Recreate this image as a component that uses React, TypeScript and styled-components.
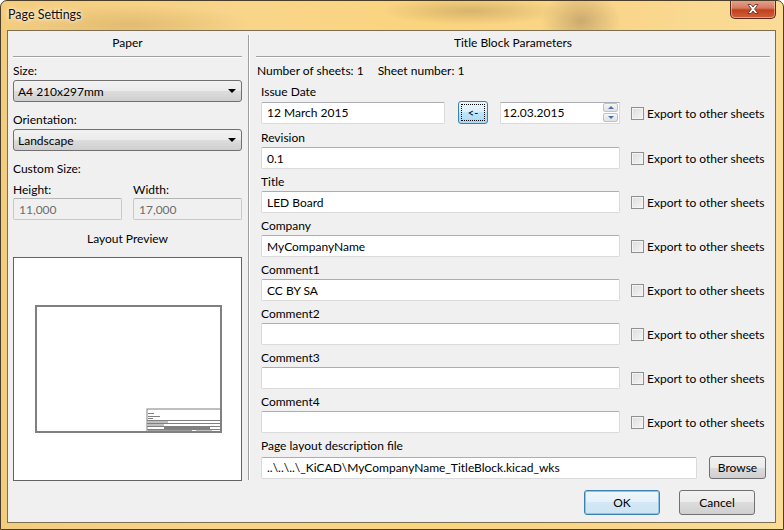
import React from "react";
import styled, { createGlobalStyle } from "styled-components";

const Global = createGlobalStyle`
  html, body {
    margin: 0;
    padding: 0;
    background: #ffffff;
  }
  * {
    box-sizing: border-box;
  }
`;

const font = `"Lato", "Noto Sans", sans-serif`;

const Window = styled.div`
  width: 784px;
  height: 530px;
  display: flex;
  flex-direction: column;
  border: 1px solid #4a3e28;
  border-radius: 7px 7px 0 0;
  overflow: hidden;
  font-family: ${font};
  font-size: 12px;
  color: #000;
  background:
    radial-gradient(ellipse 120px 20px at 130px 24px, rgba(200, 160, 90, 0.45), transparent),
    radial-gradient(ellipse 90px 14px at 470px 10px, rgba(150, 120, 70, 0.35), transparent),
    radial-gradient(ellipse 40px 30px at 580px 20px, rgba(120, 90, 60, 0.35), transparent),
    linear-gradient(90deg, #f3cd7e 0%, #f8d58a 30%, #fbd47e 55%, #f9d68b 80%, #fbdc97 100%);
`;

const TitleBar = styled.div`
  height: 29px;
  display: flex;
  justify-content: space-between;
  align-items: flex-start;
  padding-left: 7px;
`;

const TitleText = styled.span`
  margin-top: 6px;
  font-size: 12.5px;
  color: #111;
  text-shadow: 0 0 6px rgba(255, 255, 255, 0.9), 0 0 3px rgba(255, 255, 255, 0.9);
`;

const CloseButton = styled.div`
  width: 46px;
  height: 19px;
  margin-top: -1px;
  margin-right: 7px;
  border: 1px solid #5c2a1a;
  border-top: none;
  border-radius: 0 0 5px 5px;
  background: linear-gradient(#e8a693 0%, #d47a60 45%, #c3401d 55%, #d0603a 100%);
  box-shadow: inset 0 0 0 1px rgba(255, 220, 200, 0.5);
  display: flex;
  align-items: center;
  justify-content: center;
`;

const Client = styled.div`
  flex: 1;
  margin: 0 7px 6px 6px;
  border: 1px solid #7d6e52;
  background: #f0f0f0;
  padding: 4px 5px 7px 5px;
  display: flex;
  flex-direction: column;
`;

const Panels = styled.div`
  display: flex;
  height: 446px;
`;

const LeftCol = styled.div`
  width: 229px;
  display: flex;
  flex-direction: column;
`;

const RightCol = styled.div`
  flex: 1;
  display: flex;
  flex-direction: column;
`;

const Divider = styled.div`
  width: 2px;
  margin: 0 6px 1px 6px;
  border-left: 1px solid #a0a0a0;
  border-right: 1px solid #ffffff;
`;

const SectionHeader = styled.div`
  height: 22px;
  line-height: 16px;
  text-align: center;
  border-bottom: 1px solid #a0a0a0;
  box-shadow: 0 1px 0 #ffffff;
  flex-shrink: 0;
`;

const Label = styled.div<{ $top?: number; $center?: boolean }>`
  line-height: 16px;
  height: 16px;
  margin-top: ${(p) => p.$top ?? 0}px;
  text-align: ${(p) => (p.$center ? "center" : "left")};
  white-space: nowrap;
`;

const Select = styled.div`
  height: 22px;
  margin-top: 1px;
  border: 1px solid #707070;
  border-radius: 3px;
  background: linear-gradient(#f2f2f2 0%, #ebebeb 50%, #dddddd 50%, #cfcfcf 100%);
  display: flex;
  align-items: center;
  justify-content: space-between;
  padding: 0 5px 0 4px;
`;

const Arrow = styled.span`
  width: 0;
  height: 0;
  border-left: 4px solid transparent;
  border-right: 4px solid transparent;
  border-top: 4px solid #000;
`;

const SizeRow = styled.div`
  display: grid;
  grid-template-columns: 109px 109px;
  column-gap: 11px;
`;

const TextBox = styled.div<{ $disabled?: boolean; $width?: number }>`
  height: 22px;
  ${(p) => (p.$width ? `width: ${p.$width}px; flex-shrink: 0;` : "flex: 1;")}
  border: 1px solid ${(p) => (p.$disabled ? "#c9c9c9" : "#dadada")};
  border-top-color: ${(p) => (p.$disabled ? "#b5b5b5" : "#abadb3")};
  border-radius: 2px;
  background: ${(p) => (p.$disabled ? "#f0f0f0" : "#ffffff")};
  color: ${(p) => (p.$disabled ? "#6d6d6d" : "#000")};
  display: flex;
  align-items: center;
  padding-left: 5px;
  white-space: nowrap;
  overflow: hidden;
`;

const Preview = styled.div`
  margin-top: 10px;
  height: 224px;
  border: 1px solid #646464;
  background: #ffffff;
  display: flex;
  align-items: center;
  justify-content: center;
`;

const Info = styled.div`
  margin-top: 6px;
  line-height: 16px;
  display: flex;
  gap: 14px;
  padding-left: 1px;
`;

const Fields = styled.div`
  padding-left: 5px;
  display: flex;
  flex-direction: column;
`;

const FieldRow = styled.div<{ $top?: number }>`
  display: flex;
  align-items: center;
  margin-top: ${(p) => p.$top ?? 1}px;
`;

const SmallButton = styled.div<{ $focus?: boolean }>`
  height: 23px;
  flex-shrink: 0;
  display: flex;
  align-items: center;
  justify-content: center;
  border: 1px solid ${(p) => (p.$focus ? "#3c7fb1" : "#707070")};
  border-radius: 3px;
  background: ${(p) =>
    p.$focus
      ? "linear-gradient(#eaf6fd 0%, #d9f0fc 50%, #bee6fd 50%, #a7d9f5 100%)"
      : "linear-gradient(#f2f2f2 0%, #ebebeb 50%, #dddddd 50%, #cfcfcf 100%)"};
`;

const ArrowButton = styled(SmallButton)`
  width: 30px;
  margin: 0 12px 0 13px;
  position: relative;
  font-size: 11px;
  &::after {
    content: "";
    position: absolute;
    inset: 2px;
    border: 1px dotted #000;
  }
`;

const Spin = styled.div`
  width: 120px;
  height: 22px;
  flex-shrink: 0;
  border: 1px solid #dadada;
  border-top-color: #abadb3;
  background: #fff;
  display: flex;
  align-items: center;
  justify-content: space-between;
  padding-left: 2px;
`;

const SpinButtons = styled.div`
  display: flex;
  flex-direction: column;
  gap: 1px;
  margin-right: 1px;
`;

const SpinBtn = styled.div<{ $down?: boolean }>`
  width: 15px;
  height: 9px;
  border: 1px solid #c2c2c2;
  border-radius: 2px;
  background: linear-gradient(#f6f6f6, #e0e0e0);
  display: flex;
  align-items: center;
  justify-content: center;
  &::before {
    content: "";
    border-left: 3px solid transparent;
    border-right: 3px solid transparent;
    ${(p) => (p.$down ? "border-top: 3px solid #4a6fb0;" : "border-bottom: 3px solid #4a6fb0;")}
  }
`;

const Check = styled.label`
  display: flex;
  align-items: center;
  margin-left: 11px;
  gap: 3px;
  white-space: nowrap;
  padding-top: 1px;
`;

const Box = styled.span`
  width: 13px;
  height: 13px;
  border: 1px solid #8e8f8f;
  background: linear-gradient(135deg, #dcdcdc, #f6f6f6);
  box-shadow: inset 0 0 0 1px #f4f4f4;
`;

const Browse = styled(SmallButton)`
  width: 57px;
  margin-left: 12px;
`;

const Buttons = styled.div`
  margin-top: 9px;
  display: flex;
  justify-content: flex-end;
  gap: 19px;
  padding-right: 15px;
`;

const DialogButton = styled(SmallButton)`
  width: 76px;
  height: 25px;
`;

const OkButton = styled(DialogButton)`
  border-color: #3c7fb1;
  background: linear-gradient(#eef6fb 0%, #e4f0f8 50%, #d4e8f5 50%, #cde4f3 100%);
  box-shadow: inset 0 0 0 1px #8fc4e6;
`;

function ExportCheck() {
  return (
    <Check>
      <Box />
      Export to other sheets
    </Check>
  );
}

const fields = [
  { label: "Revision", value: "0.1" },
  { label: "Title", value: "LED Board" },
  { label: "Company", value: "MyCompanyName" },
  { label: "Comment1", value: "CC BY SA" },
  { label: "Comment2", value: "" },
  { label: "Comment3", value: "" },
  { label: "Comment4", value: "" },
];

function SheetPreview() {
  const g = "#808080";
  return (
    <svg width="227" height="222" viewBox="0 0 227 222">
      <rect x="22" y="48" width="185" height="126" fill="none" stroke={g} strokeWidth="2" />
      <rect x="133" y="151" width="74" height="23" fill="none" stroke={g} strokeWidth="1" />
      <g stroke={g} strokeWidth="1">
        <line x1="133" y1="162.5" x2="207" y2="162.5" />
        <line x1="133" y1="165.5" x2="207" y2="165.5" />
        <line x1="133" y1="168.5" x2="207" y2="168.5" />
        <line x1="133" y1="171.5" x2="207" y2="171.5" />
        <line x1="134" y1="155.5" x2="140" y2="155.5" />
        <line x1="134" y1="158.5" x2="146" y2="158.5" />
        <line x1="134" y1="160.5" x2="139" y2="160.5" />
        <line x1="134" y1="164" x2="154" y2="164" />
        <line x1="134" y1="167" x2="150" y2="167" />
        <line x1="150" y1="170" x2="196" y2="170" strokeWidth="2" />
        <line x1="134" y1="173" x2="178" y2="173" strokeWidth="1.5" />
        <line x1="182" y1="173" x2="198" y2="173" />
      </g>
    </svg>
  );
}

export default function App() {
  return (
    <>
      <Global />
      <Window>
        <TitleBar>
          <TitleText>Page Settings</TitleText>
          <CloseButton>
            <svg width="12" height="10" viewBox="0 0 12 10">
              <path
                d="M1 0.5 L4 0.5 L6 3 L8 0.5 L11 0.5 L7.6 5 L11 9.5 L8 9.5 L6 7 L4 9.5 L1 9.5 L4.4 5 Z"
                fill="#ffffff"
                stroke="#5a2a20"
                strokeWidth="0.8"
              />
            </svg>
          </CloseButton>
        </TitleBar>
        <Client>
          <Panels>
            <LeftCol>
              <SectionHeader>Paper</SectionHeader>
              <Label $top={6}>Size:</Label>
              <Select>
                A4 210x297mm
                <Arrow />
              </Select>
              <Label $top={10}>Orientation:</Label>
              <Select>
                Landscape
                <Arrow />
              </Select>
              <Label $top={10}>Custom Size:</Label>
              <SizeRow>
                <Label $top={5}>Height:</Label>
                <Label $top={5}>Width:</Label>
                <TextBox $disabled>11,000</TextBox>
                <TextBox $disabled>17,000</TextBox>
              </SizeRow>
              <Label $top={11} $center>
                Layout Preview
              </Label>
              <Preview>
                <SheetPreview />
              </Preview>
            </LeftCol>
            <Divider />
            <RightCol>
              <SectionHeader>Title Block Parameters</SectionHeader>
              <Info>
                <span>Number of sheets: 1</span>
                <span>Sheet number: 1</span>
              </Info>
              <Fields>
                <Label $top={5}>Issue Date</Label>
                <FieldRow>
                  <TextBox $width={184}>12 March 2015</TextBox>
                  <ArrowButton $focus>&lt;-</ArrowButton>
                  <Spin>
                    12.03.2015
                    <SpinButtons>
                      <SpinBtn />
                      <SpinBtn $down />
                    </SpinButtons>
                  </Spin>
                  <ExportCheck />
                </FieldRow>
                {fields.map((f, i) => (
                  <React.Fragment key={f.label}>
                    <Label $top={i === 0 ? 6 : 5}>{f.label}</Label>
                    <FieldRow>
                      <TextBox $width={359}>{f.value}</TextBox>
                      <ExportCheck />
                    </FieldRow>
                  </React.Fragment>
                ))}
                <Label $top={5}>Page layout description file</Label>
                <FieldRow $top={2}>
                  <TextBox $width={436}>..\..\..\_KiCAD\MyCompanyName_TitleBlock.kicad_wks</TextBox>
                  <Browse>Browse</Browse>
                </FieldRow>
              </Fields>
            </RightCol>
          </Panels>
          <Buttons>
            <OkButton>OK</OkButton>
            <DialogButton>Cancel</DialogButton>
          </Buttons>
        </Client>
      </Window>
    </>
  );
}
